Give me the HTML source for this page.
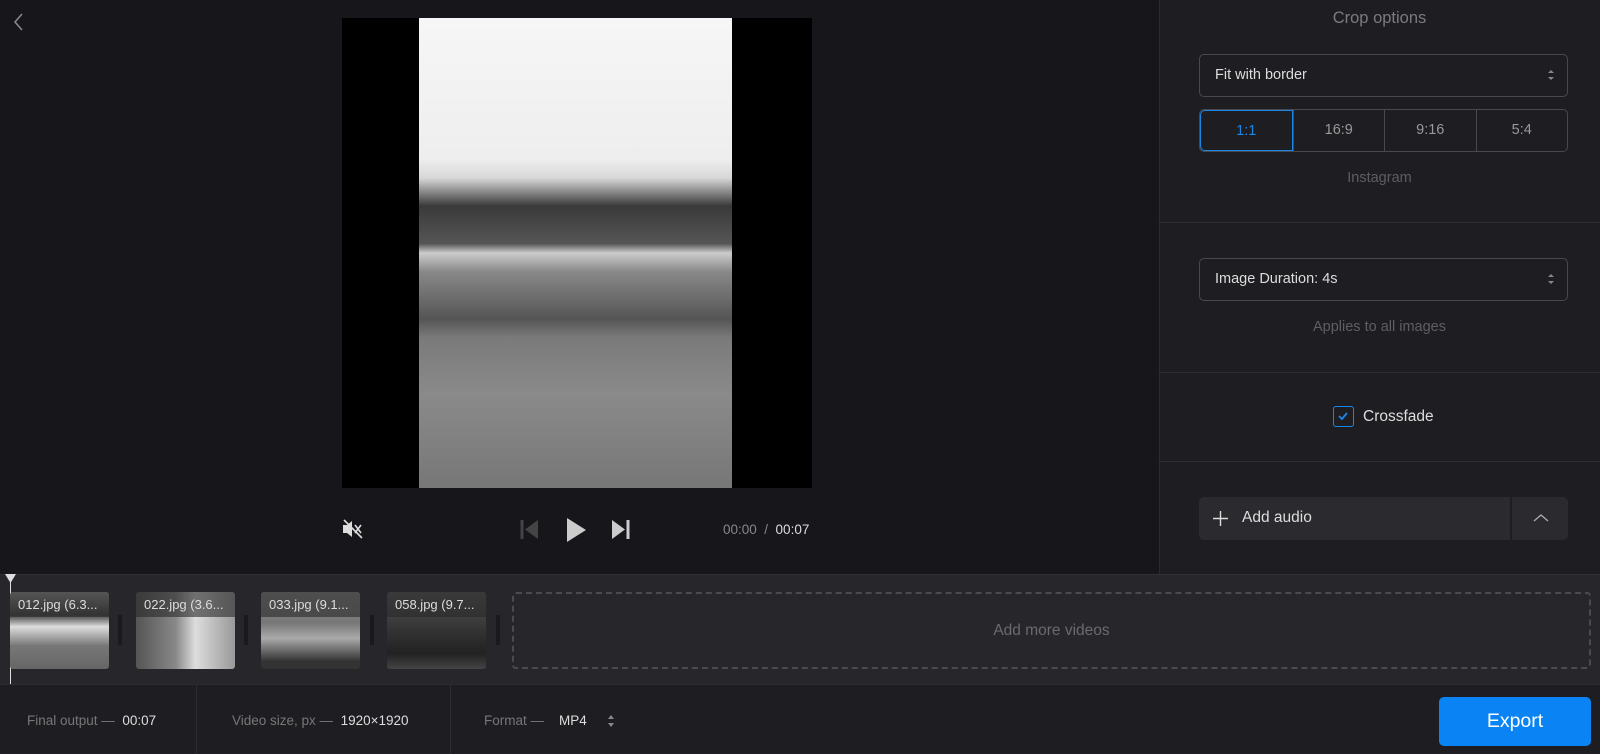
<!DOCTYPE html>
<html><head><style>
*{margin:0;padding:0;box-sizing:border-box}
body{width:1600px;height:754px;background:#16161b;font-family:"Liberation Sans",sans-serif;position:relative;overflow:hidden;color:#ccc}
.abs{position:absolute}
.panel{left:1159px;top:0;width:441px;height:574px;background:#1e1e22;border-left:1px solid #2a2a2f}
.sep{left:1159px;width:441px;height:1px;background:#2c2c31}
.sel{left:1199px;width:369px;height:43px;border:1px solid #48484e;border-radius:5px;font-size:14.5px;color:#ddd;padding-left:15px;line-height:41px}
.arr{position:absolute;right:12px;top:14px;width:8px;height:12px}
.seg{left:1199px;top:109px;width:369px;height:43px;border:1px solid #48484e;border-radius:5px;display:flex;overflow:hidden}
.seg div{flex:1;text-align:center;line-height:41px;font-size:14.5px;color:#999;border-left:1px solid #48484e}
.seg div:first-child{border:1px solid #1a86e8;color:#1a86e8;border-radius:5px 0 0 5px}
.hint{left:1159px;width:441px;text-align:center;font-size:14.5px;color:#5d5d63}
.tl{left:0;top:574px;width:1600px;height:110px;background:#26262b;border-top:1px solid #303036}
.thumb{top:592px;width:99px;height:77px;border-radius:3px;overflow:hidden}
.thumb span{position:absolute;left:0;right:0;top:0;height:25px;background:rgba(40,40,40,.6);color:#ddd;font-size:13px;padding:5px 8px;white-space:nowrap}
.bar{left:0;top:684px;width:1600px;height:70px;background:#1e1e22;border-top:1px solid #2c2c31}
.bt{top:713px;font-size:13.5px;color:#777}
.bt b{font-weight:normal;color:#ddd}
</style></head><body>
<svg class="abs" style="left:12px;top:12px" width="14" height="20"><path d="M10 2 L3 10 L10 18" stroke="#888" stroke-width="1.6" fill="none"/></svg>
<div class="abs" style="left:342px;top:18px;width:470px;height:470px;background:#000"></div>
<div class="abs" style="left:419px;top:18px;width:313px;height:470px;background:linear-gradient(#f6f6f6 0%,#eee 30%,#d8d8d8 34%,#3a3a3a 40%,#555 48%,#ccc 50%,#888 54%,#6a6a6a 60%,#555 64%,#7a7a7a 68%,#8a8a8a 80%,#777 100%)"></div>
<svg class="abs" style="left:341px;top:518px" width="24" height="22"><path d="M2 7h4l5-4v16l-5-4H2z" fill="#ddd"/><path d="M14 7l6 8M20 7l-6 8M3 2l18 18" stroke="#ddd" stroke-width="1.6"/></svg>
<svg class="abs" style="left:520px;top:518px" width="115" height="26"><path d="M2 2v19" stroke="#444" stroke-width="3"/><path d="M18 2L5 11.5l13 9.5z" fill="#444"/><path d="M47 0v24l19-12z" fill="#ccc"/><path d="M92 2l13 9.5-13 9.5z" fill="#ccc"/><path d="M108 2v19" stroke="#ccc" stroke-width="3"/></svg>
<div class="abs" style="left:723px;top:522px;font-size:13.5px;color:#888">00:00 &nbsp;/&nbsp; <span style="color:#ddd">00:07</span></div>

<div class="abs panel"></div>
<div class="abs hint" style="top:9px;font-size:16.5px;color:#7a7a80">Crop options</div>
<div class="abs sel" style="top:54px">Fit with border<svg class="arr" viewBox="0 0 8 12"><path d="M1 4l3-3 3 3zM1 8l3 3 3-3z" fill="#888"/></svg></div>
<div class="abs seg"><div>1:1</div><div>16:9</div><div>9:16</div><div>5:4</div></div>
<div class="abs hint" style="top:170px">Instagram</div>
<div class="abs sep" style="top:222px"></div>
<div class="abs sel" style="top:258px">Image Duration: 4s<svg class="arr" viewBox="0 0 8 12"><path d="M1 4l3-3 3 3zM1 8l3 3 3-3z" fill="#888"/></svg></div>
<div class="abs hint" style="top:319px">Applies to all images</div>
<div class="abs sep" style="top:372px"></div>
<div class="abs" style="left:1333px;top:406px;width:21px;height:21px;border:1.5px solid #1a86e8;border-radius:3px"><svg width="18" height="18" style="position:absolute;left:0;top:0"><path d="M5 9l3 3 5-6" stroke="#1a86e8" stroke-width="1.8" fill="none"/></svg></div>
<div class="abs" style="left:1363px;top:408px;font-size:15.5px;color:#ddd">Crossfade</div>
<div class="abs sep" style="top:461px"></div>
<div class="abs" style="left:1199px;top:497px;width:311px;height:43px;background:#2a2a2f;border-radius:5px 0 0 5px"></div>
<div class="abs" style="left:1512px;top:497px;width:56px;height:43px;background:#2a2a2f;border-radius:0 5px 5px 0"></div>
<svg class="abs" style="left:1212px;top:510px" width="17" height="17"><path d="M8.5 1v15M1 8.5h15" stroke="#ddd" stroke-width="1.4"/></svg>
<div class="abs" style="left:1242px;top:509px;font-size:15.5px;color:#ddd">Add audio</div>
<svg class="abs" style="left:1533px;top:513px" width="16" height="10"><path d="M1 8l7-6 7 6" stroke="#aaa" stroke-width="1.4" fill="none"/></svg>

<div class="abs tl"></div>
<div class="abs" style="left:10px;top:578px;width:1px;height:106px;background:#ddd"></div>
<svg class="abs" style="left:5px;top:574px" width="11" height="9"><path d="M0 0h11L5.5 9z" fill="#ddd"/></svg>
<div class="abs thumb" style="left:10px;background:linear-gradient(#999 0%,#444 30%,#ddd 45%,#777 70%,#666 100%)"><span>012.jpg (6.3...</span></div>
<div class="abs thumb" style="left:136px;background:linear-gradient(90deg,#555,#888 40%,#ddd 60%,#999)"><span>022.jpg (3.6...</span></div>
<div class="abs thumb" style="left:261px;background:linear-gradient(#888,#777 40%,#aaa 60%,#333 90%)"><span>033.jpg (9.1...</span></div>
<div class="abs thumb" style="left:387px;background:linear-gradient(#555,#333 50%,#222 80%,#444)"><span>058.jpg (9.7...</span></div>
<div class="abs" style="left:118px;top:615px;width:4px;height:30px;background:#1a1a1e"></div>
<div class="abs" style="left:244px;top:615px;width:4px;height:30px;background:#1a1a1e"></div>
<div class="abs" style="left:370px;top:615px;width:4px;height:30px;background:#1a1a1e"></div>
<div class="abs" style="left:496px;top:615px;width:4px;height:30px;background:#1a1a1e"></div>
<div class="abs" style="left:512px;top:592px;width:1079px;height:77px;border:2px dashed #4a4a50;border-radius:4px;text-align:center;line-height:73px;font-size:15.5px;color:#6a6a70">Add more videos</div>

<div class="abs bar"></div>
<div class="abs" style="left:196px;top:685px;width:1px;height:69px;background:#2c2c31"></div>
<div class="abs" style="left:450px;top:685px;width:1px;height:69px;background:#2c2c31"></div>
<div class="abs bt" style="left:27px">Final output — &nbsp;<b>00:07</b></div>
<div class="abs bt" style="left:232px">Video size, px — &nbsp;<b>1920×1920</b></div>
<div class="abs bt" style="left:484px">Format — &nbsp;&nbsp;&nbsp;<b>MP4</b></div>
<svg class="abs" style="left:607px;top:713px" width="8" height="16"><path d="M1 6l3-4 3 4zM1 10l3 4 3-4z" fill="#888"/></svg>
<div class="abs" style="left:1439px;top:697px;width:152px;height:49px;background:#0a84f4;border-radius:5px;color:#fff;font-size:19.5px;text-align:center;line-height:49px">Export</div>
</body></html>
